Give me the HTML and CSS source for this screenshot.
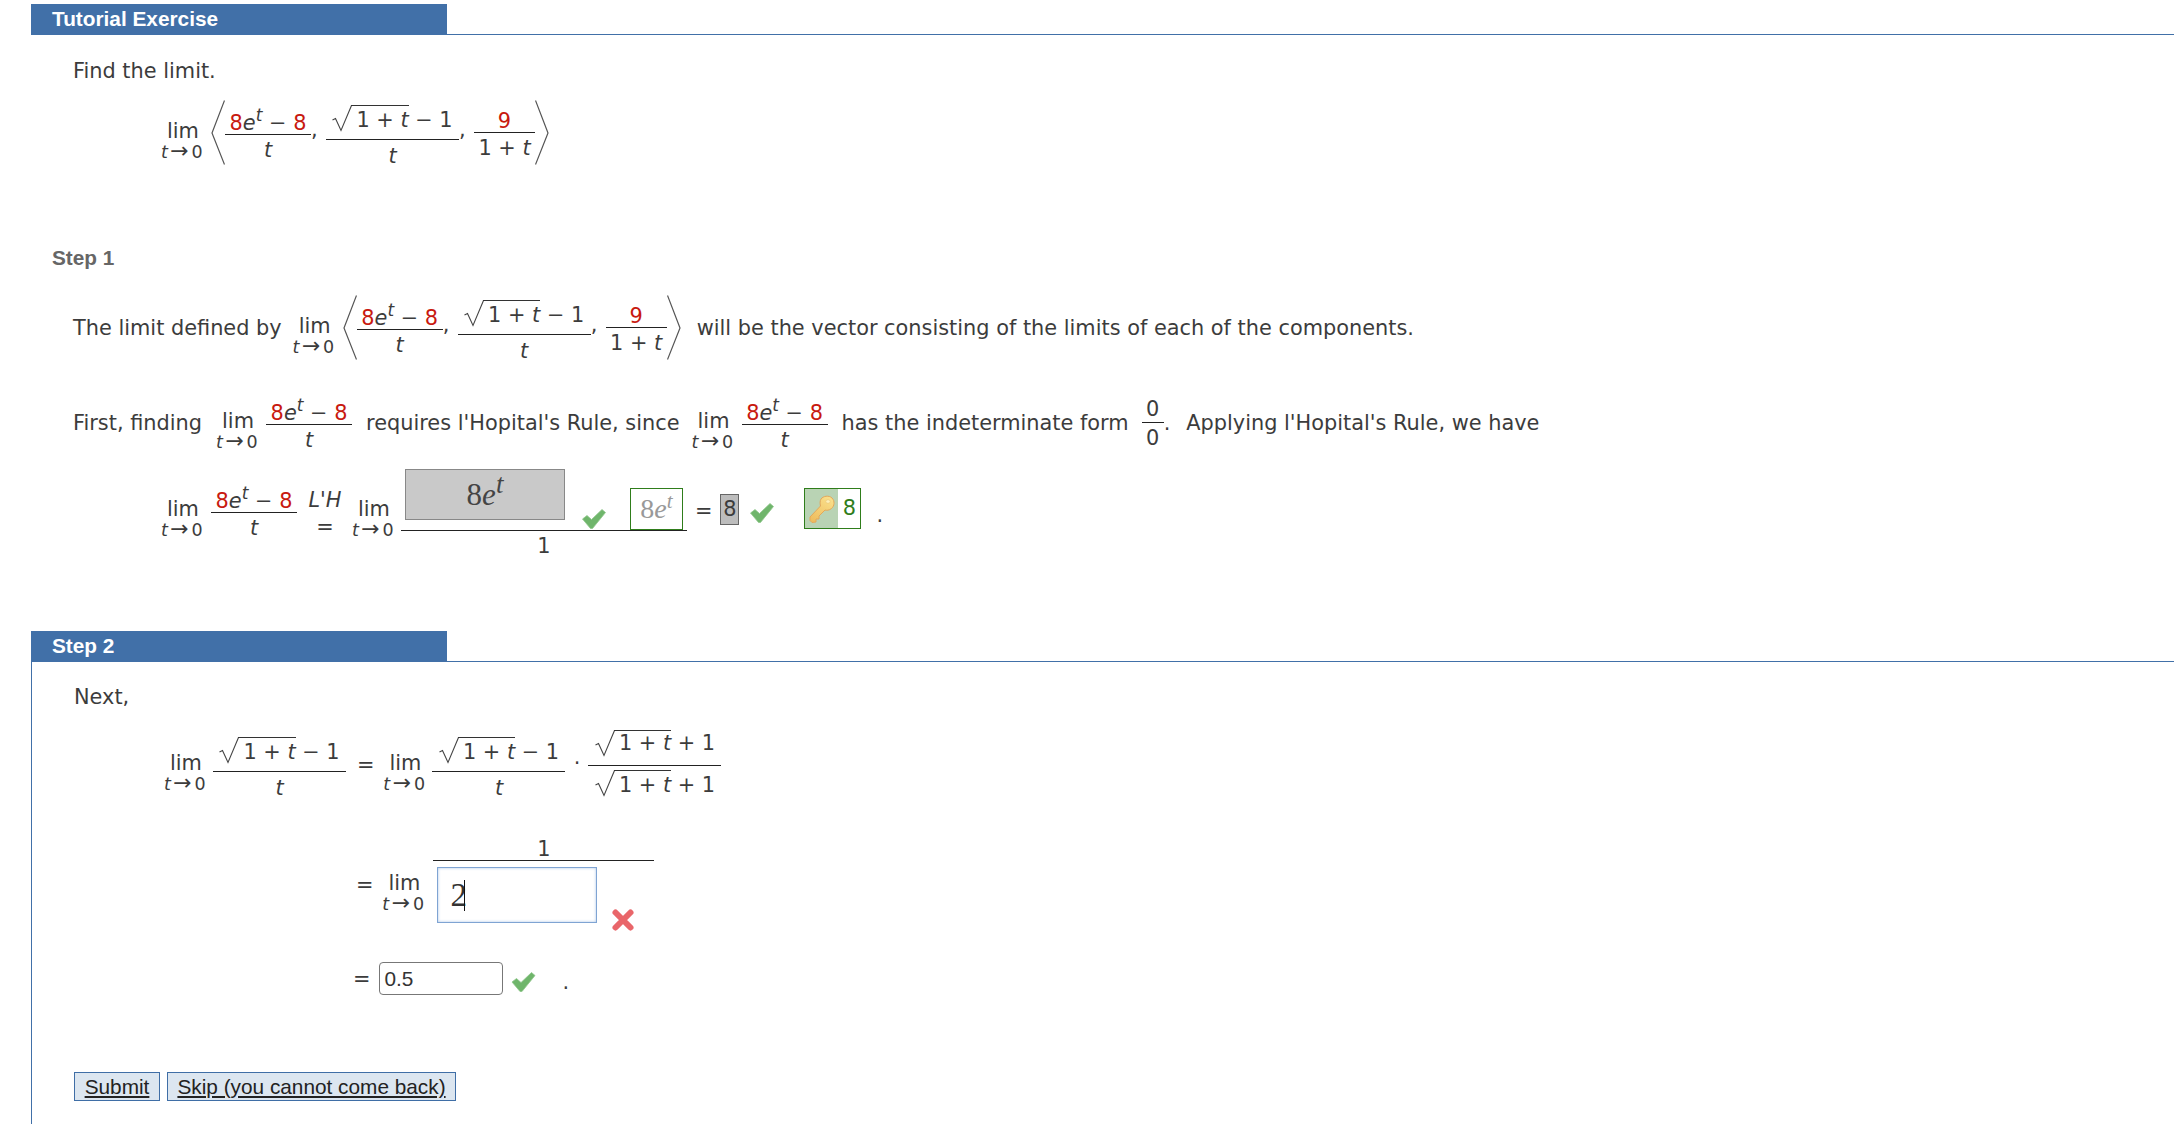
FILE: index.html
```html
<!DOCTYPE html>
<html lang="en">
<head>
<meta charset="utf-8">
<title>Tutorial Exercise</title>
<link rel="stylesheet" href="styles.css">
</head>
<body>
<svg class="defs" width="0" height="0" aria-hidden="true">
  <defs>
    <linearGradient id="gold" x1="0.8" y1="0" x2="0.2" y2="1"><stop offset="0" stop-color="#fae08c"/><stop offset="1" stop-color="#eebd5e"/></linearGradient>
    <symbol id="ang-l" viewBox="0 0 14 65"><path d="M13.5 0.5 L1 33 L13.5 64.5" fill="none" stroke="#555" stroke-width="1.2"/></symbol>
    <symbol id="ang-r" viewBox="0 0 14 65"><path d="M0.5 0.5 L13 33 L0.5 64.5" fill="none" stroke="#555" stroke-width="1.2"/></symbol>
    <symbol id="rad" viewBox="0 0 20 27"><path d="M0.5 15 L3.5 13.5 L9 25.5 L19.5 0.5" fill="none" stroke="#444" stroke-width="1.1"/></symbol>
    <symbol id="check" viewBox="0 0 24 20"><path d="M0.5 10 L5 6.5 L9.5 10.5 L20 0.5 L23.5 3.5 L10.5 19.5 L8.5 19.5 Z" fill="#6fb56b" stroke="#8fc78b" stroke-width="0.8"/></symbol>
    <symbol id="cross" viewBox="0 0 24 24"><path d="M4.5 4.5 L19.5 19.5 M19.5 4.5 L4.5 19.5" fill="none" stroke="#e9666a" stroke-width="6" stroke-linecap="round"/></symbol>
    <symbol id="key" viewBox="0 0 26 28"><path d="M12 4 C14 1 20 0 23 3 C26 6 25.5 11 22.5 13.5 C20 15.5 17.5 15.5 16 15 L10 21 L10 24 L7 24 L7 27 L3 27.5 L1 25.5 L1 22 L11.5 11 C10.8 8 11 6 12 4 Z" fill="url(#gold)" stroke="#e3a85a" stroke-width="1"/><ellipse cx="19" cy="6.5" rx="2.2" ry="1.8" fill="#fdf0bb" stroke="#e8c478" stroke-width="0.6"/></symbol>
  </defs>
</svg>
<main class="page">
  <section class="sec">
    <header class="head"><h2 class="bar">Tutorial Exercise</h2></header>
    <div class="body">
      <p class="para find">Find the limit.</p>
      <div class="row row-first">
        <div class="lim"><span class="lim-t">lim</span><span class="lim-s"><i>t</i><span class="arr">→</span>0</span></div>
        <svg class="ang ang-first"><use href="#ang-l"/></svg>
        <div class="frac fa"><div class="num"><span><span class="red">8</span><i>e</i><sup><i>t</i></sup> − <span class="red">8</span></span></div><div class="den"><i>t</i></div></div>
        <span class="comma">,</span>
        <div class="frac fb"><div class="num"><span class="sqrt"><svg class="radical"><use href="#rad"/></svg><span class="radicand">1 + <i>t</i></span></span><span class="rest"> − 1</span></div><div class="den"><i>t</i></div></div>
        <span class="comma">,</span>
        <div class="frac fc"><div class="num"><span class="red">9</span></div><div class="den">1 + <i>t</i></div></div>
        <svg class="ang"><use href="#ang-r"/></svg>
      </div>

      <h3 class="step-label">Step 1</h3>
      <div class="row row-text row-s1">
        <span class="txt">The limit defined by</span>
        <div class="lim lim-gap"><span class="lim-t">lim</span><span class="lim-s"><i>t</i><span class="arr">→</span>0</span></div>
        <svg class="ang ang-first"><use href="#ang-l"/></svg>
        <div class="frac fa"><div class="num"><span><span class="red">8</span><i>e</i><sup><i>t</i></sup> − <span class="red">8</span></span></div><div class="den"><i>t</i></div></div>
        <span class="comma">,</span>
        <div class="frac fb"><div class="num"><span class="sqrt"><svg class="radical"><use href="#rad"/></svg><span class="radicand">1 + <i>t</i></span></span><span class="rest"> − 1</span></div><div class="den"><i>t</i></div></div>
        <span class="comma">,</span>
        <div class="frac fc"><div class="num"><span class="red">9</span></div><div class="den">1 + <i>t</i></div></div>
        <svg class="ang"><use href="#ang-r"/></svg>
        <span class="txt txt-after">will be the vector consisting of the limits of each of the components.</span>
      </div>

      <div class="row row-text row-find">
        <span class="txt">First, finding</span>
        <div class="lim lim-find"><span class="lim-t">lim</span><span class="lim-s"><i>t</i><span class="arr">→</span>0</span></div>
        <div class="frac fa fgap"><div class="num"><span><span class="red">8</span><i>e</i><sup><i>t</i></sup> − <span class="red">8</span></span></div><div class="den"><i>t</i></div></div>
        <span class="txt txt-mid">requires l'Hopital's Rule, since</span>
        <div class="lim lim-gap2"><span class="lim-t">lim</span><span class="lim-s"><i>t</i><span class="arr">→</span>0</span></div>
        <div class="frac fa fgap"><div class="num"><span><span class="red">8</span><i>e</i><sup><i>t</i></sup> − <span class="red">8</span></span></div><div class="den"><i>t</i></div></div>
        <span class="txt txt-mid2">has the indeterminate form</span>
        <div class="frac fz"><div class="num">0</div><div class="den">0</div></div>
        <span class="txt">.</span>
        <span class="txt txt-apply">Applying l'Hopital's Rule, we have</span>
      </div>

      <div class="row row-lh">
        <div class="lim"><span class="lim-t">lim</span><span class="lim-s"><i>t</i><span class="arr">→</span>0</span></div>
        <div class="frac fa fgap-lh"><div class="num"><span><span class="red">8</span><i>e</i><sup><i>t</i></sup> − <span class="red">8</span></span></div><div class="den"><i>t</i></div></div>
        <div class="lh"><i class="lh-t">L'H</i><span class="lh-eq">=</span></div>
        <div class="lim lim-lh"><span class="lim-t">lim</span><span class="lim-s"><i>t</i><span class="arr">→</span>0</span></div>
        <div class="frac fbig">
          <div class="num">
            <div class="ans-gray"><span>8<i>e</i><sup><i>t</i></sup></span></div>
            <svg class="check check-a"><use href="#check"/></svg>
            <div class="ans-green"><span>8<i>e</i><sup><i>t</i></sup></span></div>
          </div>
          <div class="den">1</div>
        </div>
        <span class="eq eq-lh">=</span>
        <span class="ans-val">8</span>
        <svg class="check check-b"><use href="#check"/></svg>
        <div class="keybox"><span class="keyicon"><svg class="key"><use href="#key"/></svg></span><span class="keyval">8</span></div>
        <span class="dot-end">.</span>
      </div>
    </div>
  </section>

  <section class="sec sec-two">
    <header class="head"><h2 class="bar">Step 2</h2></header>
    <div class="body body-two">
      <p class="para next">Next,</p>
      <div class="row row-a">
        <div class="lim"><span class="lim-t">lim</span><span class="lim-s"><i>t</i><span class="arr">→</span>0</span></div>
        <div class="frac fb fgap-a"><div class="num"><span class="sqrt"><svg class="radical"><use href="#rad"/></svg><span class="radicand">1 + <i>t</i></span></span><span class="rest"> − 1</span></div><div class="den"><i>t</i></div></div>
        <span class="eq eq-a">=</span>
        <div class="lim lim-a"><span class="lim-t">lim</span><span class="lim-s"><i>t</i><span class="arr">→</span>0</span></div>
        <div class="frac fb fgap-a"><div class="num"><span class="sqrt"><svg class="radical"><use href="#rad"/></svg><span class="radicand">1 + <i>t</i></span></span><span class="rest"> − 1</span></div><div class="den"><i>t</i></div></div>
        <span class="cdot">·</span>
        <div class="frac fd"><div class="num"><span class="sqrt"><svg class="radical"><use href="#rad"/></svg><span class="radicand">1 + <i>t</i></span></span><span class="rest"> + 1</span></div><div class="den"><span class="sqrt"><svg class="radical"><use href="#rad"/></svg><span class="radicand">1 + <i>t</i></span></span><span class="rest"> + 1</span></div></div>
      </div>
      <div class="row row-b">
        <span class="eq">=</span>
        <div class="lim lim-a"><span class="lim-t">lim</span><span class="lim-s"><i>t</i><span class="arr">→</span>0</span></div>
        <div class="frac finput">
          <div class="num">1</div>
          <div class="den">
            <div class="focusbox"><span class="typed">2</span><span class="caret"></span></div>
            <svg class="cross"><use href="#cross"/></svg>
          </div>
        </div>
      </div>
      <div class="row row-c">
        <span class="eq">=</span>
        <input class="field" type="text" value="0.5" aria-label="Limit value">
        <svg class="check check-c"><use href="#check"/></svg>
        <span class="dot-c">.</span>
      </div>
      <div class="actions">
        <button class="btn btn-submit" type="button">Submit</button>
        <button class="btn btn-skip" type="button">Skip (you cannot come back)</button>
      </div>
    </div>
  </section>
</main>
</body>
</html>
```
FILE: styles.css
```css
* { box-sizing: border-box; }
html, body { margin: 0; padding: 0; background: #fff; }
body { font-family: "DejaVu Sans", sans-serif; font-size: 20.87px; line-height: 24px; color: #3c3c3c; }
.defs { position: absolute; }
.page { padding: 4px 0 0 31px; overflow: hidden; }

.head { display: flex; border-bottom: 1px solid #4170a8; }
.bar { width: 416px; height: 31px; margin: 0 0 -1px; padding: 0 0 0 21px; background: #4170a8; color: #fff;
  font: bold 20.8px/29px "Liberation Sans", sans-serif; }
.body { padding-left: 42px; }
.sec-two { margin-top: 74px; }
.body-two { border-left: 1px solid #4170a8; padding-top: 23px; padding-bottom: 24px; }

.para { margin: 24px 0 0; }
.next { margin: 0; }
.step-label { margin: 81px 0 0 -21px; color: #666; font: bold 20.8px/24px "Liberation Sans", sans-serif; }

.row { display: flex; align-items: center; }
.row-first { margin: 17px 0 0 89px; height: 65px; }
.row-text { white-space: nowrap; }
.row-s1 { margin-top: 25px; height: 65px; }
.row-find { margin-top: 31px; height: 64px; }
.row-lh { margin: 9px 0 0 89px; height: 93px; }
.row-a { margin: 20px 0 0 91px; height: 72px; }
.row-b { margin: 35px 0 0 282px; height: 97px; }
.row-c { margin: 29px 0 0 279px; height: 33px; }

.lim { display: flex; flex-direction: column; align-items: center; width: 42px; padding-top: 14px; flex: none; }
.lim-t { line-height: 24px; }
.lim-s { font-size: 17.5px; line-height: 18px; letter-spacing: 2.6px; white-space: nowrap; }
.arr { font-size: 22px; line-height: 0; }
.lim-gap { margin-left: 12px; }
.lim-find { margin-left: 15px; }
.lim-gap2 { margin-left: 13px; }
.lim-lh { margin-left: 12px; }
.lim-a { margin-left: 10px; }

.ang { width: 14px; height: 65px; flex: none; }
.ang-first { margin-left: 7px; }
.comma { width: 15px; flex: none; margin-top: -6px; }

.frac { display: flex; flex-direction: column; flex: none; text-align: center; }
.num { display: flex; align-items: flex-end; justify-content: center; border-bottom: 1px solid #222; white-space: nowrap; }
.den { line-height: 24px; }
.red { color: #c8190f; }
sup { font-size: 17px; line-height: 0; vertical-align: 9px; }
i { font-style: italic; }

.fa { width: 86px; }
.fa .num { height: 31px; line-height: 22px; }
.fa .den { padding-top: 3px; height: 27px; }
.fb { width: 133px; }
.fb .num { height: 42px; padding-bottom: 7px; }
.fb .den { padding-top: 4px; height: 28px; }
.fc { width: 61px; }
.fc .num { height: 27px; line-height: 22px; }
.fc .den { padding-top: 3px; height: 27px; }
.fd { width: 133px; }
.fd .num { height: 37px; padding-bottom: 8px; }
.fd .num .radicand { padding-top: 0; }
.fd .num .rest { padding-bottom: 2px; }
.fd .den { height: 36px; padding-top: 4px; display: flex; justify-content: center; align-items: flex-start; }
.fd .den .rest { padding-top: 3px; }
.fz { width: 22px; margin-left: 13px; }
.fz .num { height: 30px; padding-bottom: 1px; }
.fz .den { height: 30px; padding-top: 3px; }

.sqrt { display: inline-flex; align-items: flex-start; }
.radical { width: 20px; height: 27px; flex: none; }
.radicand { display: block; border-top: 1px solid #333; padding: 2px 0 0 5px; line-height: 24px; height: 27px; margin-left: -1px; white-space: nowrap; }
.rest { white-space: pre; }

.txt { flex: none; }
.txt-after { margin-left: 16px; }
.txt-mid { margin-left: 14px; }
.txt-mid2 { margin-left: 14px; }
.txt-apply { margin-left: 16px; }
.fgap { margin-left: 7px; }
.fgap-lh { margin-left: 7px; }
.fgap-a { margin-left: 6px; }

.lh { display: flex; flex-direction: column; align-items: center; width: 32px; margin-left: 12px; padding-top: 6px; flex: none; }
.lh-t { line-height: 24px; }
.lh-eq { line-height: 24px; margin-top: 3px; }

.fbig { width: 286px; margin-left: 6px; }
.fbig .num { height: 67px; justify-content: flex-start; align-items: flex-end; padding-left: 4px; }
.fbig .den { height: 26px; padding-top: 3px; }
.ans-gray { width: 160px; height: 51px; margin-bottom: 10px; background: #c9c9c9; border: 1px solid #888;
  display: flex; align-items: center; justify-content: center; color: #444; font: 31px/36px "Liberation Serif", serif; }
.ans-gray sup { font-size: 27px; vertical-align: 12px; }
.check { flex: none; }
.check-a { width: 24px; height: 20px; margin: 0 0 1px 17px; }
.ans-green { width: 53px; height: 42px; margin-left: 24px; border: 1px solid #2f7d1b; display: flex; align-items: center; justify-content: center;
  color: #999; font: 28px/30px "Liberation Serif", serif; }
.ans-green sup { font-size: 21px; vertical-align: 10px; }
.eq { flex: none; }
.eq-lh { margin-left: 8px; }
.ans-val { width: 19px; height: 31px; margin: -3px 0 0 8px; background: #bdbdbd; border: 1px solid #666; line-height: 29px; text-align: center; flex: none; }
.check-b { width: 24px; height: 20px; margin: 4px 0 0 11px; }
.keybox { display: flex; width: 57px; height: 41px; margin: -4px 0 0 30px; border: 1px solid #2f7d1b; flex: none; }
.keyicon { width: 33px; background: #b9d3b4; display: flex; align-items: center; justify-content: center; }
.key { width: 26px; height: 28px; }
.keyval { flex: 1; color: #2f7d1b; text-align: center; line-height: 39px; }
.dot-end { margin: 8px 0 0 15px; flex: none; }

.eq-a { margin-left: 11px; }
.cdot { width: 23px; text-align: center; margin-top: -4px; flex: none; }

.finput { width: 221px; margin-left: 8px; }
.finput .num { height: 25px; line-height: 22px; }
.finput .den { height: 72px; display: flex; align-items: flex-start; padding: 6px 0 0 4px; }
.focusbox { display: flex; align-items: flex-start; width: 160px; height: 56px; padding: 9px 0 0 12px; border: 1px solid #7fa4d3; box-shadow: inset 0 0 3px #a9c4e6;
  font: 33px/36px "Liberation Serif", serif; color: #333; }
.caret { width: 1px; height: 31px; margin: 3px 0 0 -3px; background: #111; }
.cross { width: 24px; height: 24px; margin: 41px 0 0 14px; flex: none; }

.field { width: 124px; height: 33px; margin-left: 9px; padding: 0 0 0 4px; border: 1px solid #777; border-radius: 4px; background: #fff;
  color: #333; font: 20.8px/24px "Liberation Sans", sans-serif; outline: none; }
.check-c { width: 25px; height: 20px; margin: 6px 0 0 8px; }
.dot-c { margin: 6px 0 0 26px; }

.actions { display: flex; gap: 7px; margin-top: 77px; }
.btn { height: 29px; padding: 0; background: #dce6f0; border: 1px solid #3f6ea6; color: #222; text-decoration: underline;
  font: 20.8px/25px "Liberation Sans", sans-serif; }
.btn-submit { width: 86px; }
.btn-skip { width: 289px; }
```
